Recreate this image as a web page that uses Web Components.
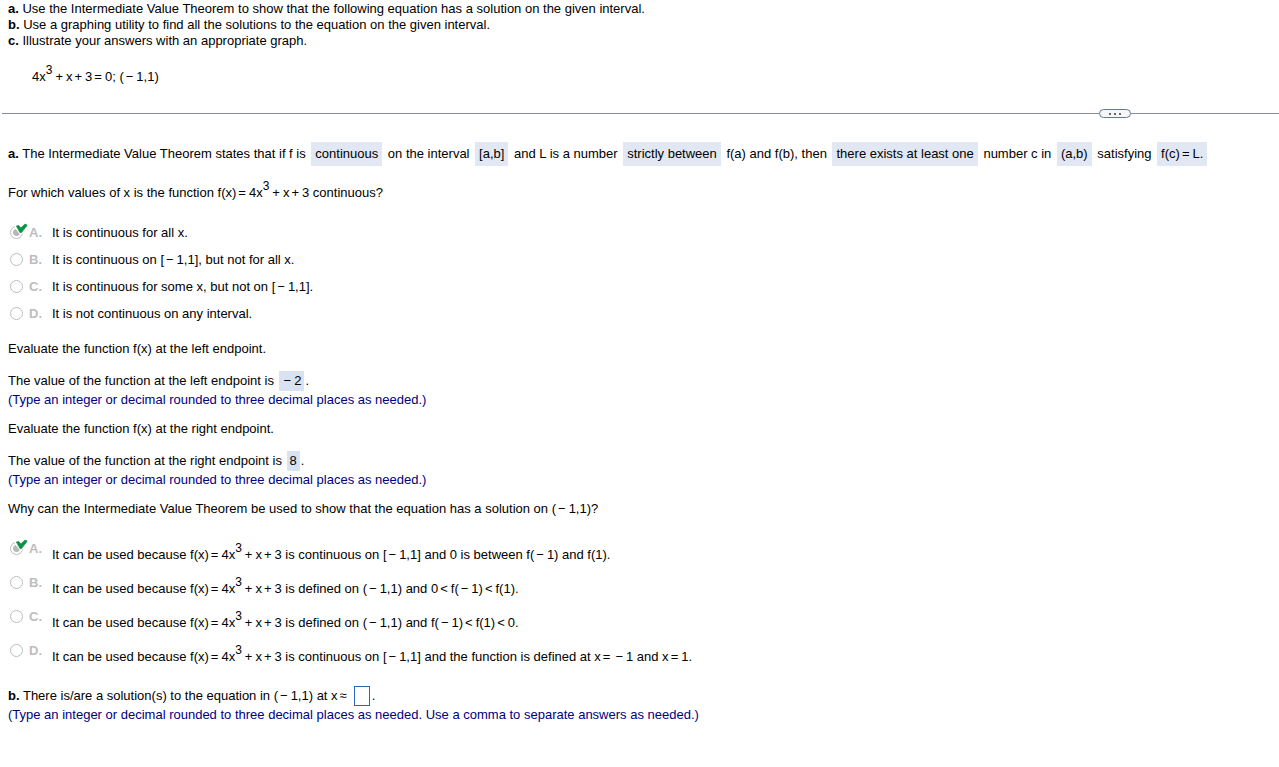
<!DOCTYPE html>
<html lang="en">
<head>
<meta charset="utf-8">
<title>Intermediate Value Theorem exercise</title>
<style>
body { margin: 0; background: #fff; color: #000; font: 13px/16px "Liberation Sans", Arial, sans-serif; }
</style>
</head>
<body>
<ivt-exercise></ivt-exercise>

<template id="exercise">
<style>
:host { display: block; padding-top: 1px; }
p { margin: 0; padding: 0 8px; }
.equation { padding-left: 32px; margin-top: 20px; }
split-divider { margin: 24px 0 23px 2px; }
.statement { line-height: 24px; }
.question { margin-top: 19px; }
choice-list { margin: 24px 8px 0; }
.step { margin-top: 19px; }
.value { margin-top: 14px; line-height: 20px; }
.value + .hint { margin-top: 1px; }
.next { margin-top: 13px; }
.hint { color: #000080; }
.part-b { margin-top: 21px; line-height: 20px; }
.part-b + .hint { margin-top: 1px; }
</style>
<main>
<p><b>a.</b> Use the Intermediate Value Theorem to show that the following equation has a solution on the given interval.</p>
<p><b>b.</b> Use a graphing utility to find all the solutions to the equation on the given interval.</p>
<p><b>c.</b> Illustrate your answers with an appropriate graph.</p>
<p class="equation"><cubic-expression></cubic-expression><math-op>=</math-op>0; (<math-op>−</math-op>1,1)</p>
<split-divider></split-divider>
<p class="statement"><b>a.</b> The Intermediate Value Theorem states that if f is <given-answer>continuous</given-answer> on the interval <given-answer>[a,b]</given-answer> and L is a number <given-answer>strictly between</given-answer> f(a) and f(b), then <given-answer>there exists at least one</given-answer> number c in <given-answer>(a,b)</given-answer> satisfying <given-answer>f(c)<math-op>=</math-op>L.</given-answer></p>
<p class="question">For which values of x is the function f(x)<math-op>=</math-op><cubic-expression></cubic-expression> continuous?</p>
<choice-list label="Continuity of the function">
<answer-choice letter="A" correct>It is continuous for all x.</answer-choice>
<answer-choice letter="B">It is continuous on [<math-op>−</math-op>1,1], but not for all x.</answer-choice>
<answer-choice letter="C">It is continuous for some x, but not on [<math-op>−</math-op>1,1].</answer-choice>
<answer-choice letter="D">It is not continuous on any interval.</answer-choice>
</choice-list>
<p class="step">Evaluate the function f(x) at the left endpoint.</p>
<p class="value">The value of the function at the left endpoint is <given-answer compact><math-op>−</math-op>2</given-answer>.</p>
<p class="hint">(Type an integer or decimal rounded to three decimal places as needed.)</p>
<p class="next">Evaluate the function f(x) at the right endpoint.</p>
<p class="value">The value of the function at the right endpoint is <given-answer compact>8</given-answer>.</p>
<p class="hint">(Type an integer or decimal rounded to three decimal places as needed.)</p>
<p class="next">Why can the Intermediate Value Theorem be used to show that the equation has a solution on (<math-op>−</math-op>1,1)?</p>
<choice-list label="Why the theorem applies">
<answer-choice tall letter="A" correct>It can be used because f(x)<math-op>=</math-op><cubic-expression></cubic-expression> is continuous on [<math-op>−</math-op>1,1] and 0 is between f(<math-op>−</math-op>1) and f(1).</answer-choice>
<answer-choice tall letter="B">It can be used because f(x)<math-op>=</math-op><cubic-expression></cubic-expression> is defined on (<math-op>−</math-op>1,1) and 0<math-op>&lt;</math-op>f(<math-op>−</math-op>1)<math-op>&lt;</math-op>f(1).</answer-choice>
<answer-choice tall letter="C">It can be used because f(x)<math-op>=</math-op><cubic-expression></cubic-expression> is defined on (<math-op>−</math-op>1,1) and f(<math-op>−</math-op>1)<math-op>&lt;</math-op>f(1)<math-op>&lt;</math-op>0.</answer-choice>
<answer-choice tall letter="D">It can be used because f(x)<math-op>=</math-op><cubic-expression></cubic-expression> is continuous on [<math-op>−</math-op>1,1] and the function is defined at x<math-op>=</math-op><math-op>−</math-op>1 and x<math-op>=</math-op>1.</answer-choice>
</choice-list>
<p class="part-b"><b>b.</b> There is/are a solution(s) to the equation in (<math-op>−</math-op>1,1) at x<math-op>≈</math-op><answer-blank label="Solutions x"></answer-blank>.</p>
<p class="hint">(Type an integer or decimal rounded to three decimal places as needed. Use a comma to separate answers as needed.)</p>
</main>
</template>

<template id="choice">
<style>
:host { display: grid; grid-template-columns: 21px 23px 1fr; align-items: start; }
.mark { position: relative; display: flex; height: 15px; align-items: center; padding-left: 2px; }
input { appearance: none; box-sizing: border-box; width: 13px; height: 13px; margin: 0; border: 1px solid #bdbdbd; border-radius: 50%; background: #fff; }
input:checked { background: radial-gradient(circle, #b8b8b8 3px, #fff 4px); }
svg { display: none; position: absolute; left: 7px; top: -2px; }
:host([correct]) svg { display: block; }
.letter { font-weight: bold; color: #bdbdbd; }
:host([tall]) .body { padding-top: 6px; }
</style>
<span class="mark"><input type="radio" id="pick" disabled><svg width="13" height="13" viewBox="0 0 13 13" aria-hidden="true"><path d="M.6 2.6 4 1.6 6 3.6 9.6.6 12.2 1.4 12.2 4 7 10.6 4.6 10.4.8 5.4Z" fill="#fff" stroke="#fff"/><path d="M1.4 3 3.8 2.6 5.8 5 9.8 1.2 11.8 1.8 11.8 2.8 6.4 9.6 5 9.6Z" fill="#0b9345" stroke="#0b9345" stroke-width=".8"/></svg></span>
<label class="letter" for="pick"></label>
<label class="body" for="pick"><slot></slot></label>
</template>

<script>
const define = (name, html, setup) => customElements.define(name, class extends HTMLElement {
  constructor() {
    super();
    this.attachShadow({ mode: "open" }).innerHTML = html;
  }
  connectedCallback() { if (setup) setup(this, this.shadowRoot); }
});

define("math-op", `<style>:host { display: inline; margin: 0 3px 0 2px; }</style><slot></slot>`);

define("cubic-expression", `<style>
:host { display: inline; }
sup { font-size: 12px; line-height: 0; vertical-align: 7px; margin-right: 1px; }
</style>4x<sup>3</sup><math-op>+</math-op>x<math-op>+</math-op>3`);

define("given-answer", `<style>
:host { display: inline-block; margin: 0 2px; padding: 0 4px; background: #e1e8f3; }
:host([compact]) { margin: 0 1px; padding: 0 3px; background: #d9e2f1; }
</style><slot></slot>`);

define("split-divider", `<style>
:host { display: flex; align-items: center; height: 9px; padding-bottom: 1px; }
:host::before, :host::after { content: ""; height: 1px; background: #858c9c; }
:host::before { flex: 1; }
:host::after { width: 148px; }
button { box-sizing: border-box; display: flex; gap: 3px; align-items: center; justify-content: center; width: 32px; height: 9px; padding: 0; border: 1px solid #69788c; border-radius: 5px; background: #f5f7fb; }
i { width: 2px; height: 2px; background: #666; }
</style><button type="button" aria-label="Resize panels"><i></i><i></i><i></i></button>`);

define("choice-list", `<style>
:host { display: block; }
div { display: grid; gap: 11px; }
:host([roomy]) div { gap: 12px; }
</style><div role="radiogroup"><slot></slot></div>`, (el, root) => {
  root.querySelector("div").setAttribute("aria-label", el.getAttribute("label"));
  el.toggleAttribute("roomy", !!el.querySelector("[tall]"));
});

define("answer-choice", document.getElementById("choice").innerHTML, (el, root) => {
  root.querySelector(".letter").textContent = el.getAttribute("letter") + ".";
  root.querySelector("input").checked = el.hasAttribute("correct");
});

define("answer-blank", `<style>
:host { display: inline-block; vertical-align: top; margin: 0 2px 0 4px; }
input { display: block; box-sizing: border-box; width: 16px; height: 20px; padding: 0 2px; border: 1px solid #2b63c0; background: #fff; font: inherit; outline: 0; }
</style><input type="text">`, (el, root) => {
  root.querySelector("input").setAttribute("aria-label", el.getAttribute("label"));
});

define("ivt-exercise", document.getElementById("exercise").innerHTML);
</script>
</body>
</html>
